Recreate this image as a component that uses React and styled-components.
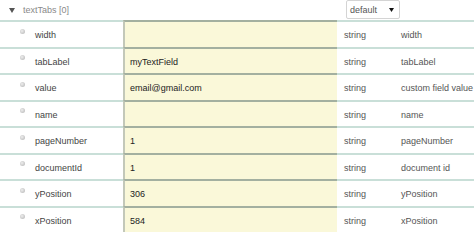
import React from "react";
import styled, { createGlobalStyle } from "styled-components";

const Global = createGlobalStyle`
  html, body { margin: 0; padding: 0; background: #fff; }
  body { font-family: "Liberation Sans", Arial, sans-serif; font-size: 9px; }
`;

const Table = styled.div`
  width: 474px;
  display: flex;
  flex-direction: column;
`;

const Header = styled.div`
  height: 20px;
  display: grid;
  grid-template-columns: 346px 1fr;
  align-items: start;
`;

const Toggle = styled.div`
  display: flex;
  align-items: center;
  height: 20px;
  padding-left: 9px;
  gap: 8px;
  color: #8a8a8a;
  font-size: 9px;
`;

const Select = styled.div`
  width: 54px;
  height: 19px;
  box-sizing: border-box;
  border: 1px solid #d4d4d4;
  border-radius: 2px;
  display: flex;
  align-items: center;
  justify-content: space-between;
  padding: 0 5px 0 3px;
  color: #555;
  font-size: 9px;
  background: #fff;
`;

const Row = styled.div`
  height: 26.5px;
  display: grid;
  grid-template-columns: 123px 214px 57px 1fr;
`;

const Cell = styled.div`
  box-sizing: border-box;
  border-top: 2px solid #c9dfd8;
  display: flex;
  align-items: center;
  padding-top: 2px;
  padding-left: 7px;
  color: #555;
  white-space: nowrap;
`;

const LabelCell = styled(Cell)`
  padding-left: 20px;
  gap: 10px;
  color: #444;
`;

const Bullet = styled.span`
  width: 5px;
  height: 5px;
  border-radius: 50%;
  background: radial-gradient(circle at 40% 40%, #eee 0, #c4c4c4 70%);
  margin-top: -8px;
  flex: none;
`;

const InputCell = styled.div`
  box-sizing: border-box;
  background: #faf8d9;
  border-top: 2px solid #a3b0a0;
  border-left: 2px solid #c3c8b9;
  display: flex;
  align-items: center;
  padding: 2px 0 0 5px;
  color: #222;
  white-space: nowrap;
`;

const rows = [
  ["width", "", "string", "width"],
  ["tabLabel", "myTextField", "string", "tabLabel"],
  ["value", "email@gmail.com", "string", "custom field value"],
  ["name", "", "string", "name"],
  ["pageNumber", "1", "string", "pageNumber"],
  ["documentId", "1", "string", "document id"],
  ["yPosition", "306", "string", "yPosition"],
  ["xPosition", "584", "string", "xPosition"],
];

export default function App() {
  return (
    <>
      <Global />
      <Table>
        <Header>
          <Toggle>
            <svg width="6" height="5" viewBox="0 0 6 5">
              <path d="M0 0 L6 0 L3 5 Z" fill="#555" />
            </svg>
            <span>textTabs [0]</span>
          </Toggle>
          <Select>
            <span>default</span>
            <svg width="5" height="4" viewBox="0 0 5 4">
              <path d="M0 0 L5 0 L2.5 4 Z" fill="#111" />
            </svg>
          </Select>
        </Header>
        {rows.map(([name, value, type, desc]) => (
          <Row key={name}>
            <LabelCell>
              <Bullet />
              <span>{name}</span>
            </LabelCell>
            <InputCell>{value}</InputCell>
            <Cell>{type}</Cell>
            <Cell>{desc}</Cell>
          </Row>
        ))}
      </Table>
    </>
  );
}
